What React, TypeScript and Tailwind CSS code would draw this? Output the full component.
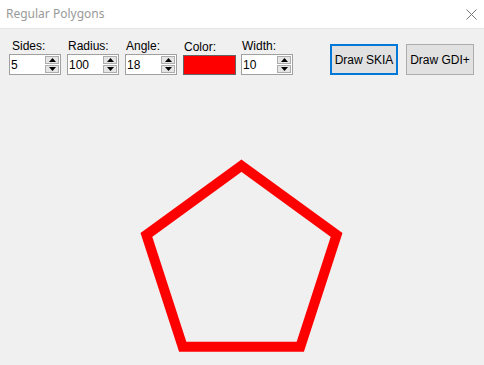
import React from 'react';

const FONT = { fontFamily: '"Liberation Sans", Arial, sans-serif' };

function Spin({ value }: { value: string }) {
  return (
    <div className="flex h-[21px] w-[52px] items-stretch border border-[#a0a0a0] bg-white">
      <div className="flex flex-1 items-center pl-[1px] text-[12px] text-black">{value}</div>
      <div className="my-[1px] mr-[1px] flex w-[14px] flex-col gap-[1px]">
        <div className="flex flex-1 items-center justify-center border border-[#adadad] bg-[#e5e5e5]">
          <svg width="7" height="4" viewBox="0 0 7 4">
            <path d="M3.5 0 L7 4 L0 4 Z" fill="#000" />
          </svg>
        </div>
        <div className="flex flex-1 items-center justify-center border border-[#adadad] bg-[#e5e5e5]">
          <svg width="7" height="4" viewBox="0 0 7 4">
            <path d="M0 0 L7 0 L3.5 4 Z" fill="#000" />
          </svg>
        </div>
      </div>
    </div>
  );
}

function Field({ label, children, indent = 3 }: { label: string; children: React.ReactNode; indent?: number }) {
  return (
    <div className="flex w-[58px] flex-col">
      <span className="h-[14px] text-[12px] leading-[14px] text-black" style={{ paddingLeft: indent }}>
        {label}
      </span>
      <div className="mt-[1px]">{children}</div>
    </div>
  );
}

function pentagonPoints(cx: number, cy: number, r: number) {
  const pts: string[] = [];
  for (let i = 0; i < 5; i++) {
    const a = (-90 + i * 72) * (Math.PI / 180);
    pts.push(`${(cx + r * Math.cos(a)).toFixed(2)},${(cy + r * Math.sin(a)).toFixed(2)}`);
  }
  return pts.join(' ');
}

export default function App() {
  return (
    <div className="flex h-[365px] w-[484px] flex-col overflow-hidden bg-[#f0f0f0]" style={FONT}>
      {/* title bar */}
      <div className="flex h-[29px] shrink-0 items-center justify-between border-b border-[#e6e6e6] bg-white pl-[6px] pr-[7px]">
        <span className="text-[12px] text-[#999999]" style={{ fontFamily: '"Noto Sans", "Open Sans", sans-serif' }}>
          Regular Polygons
        </span>
        <svg width="11" height="11" viewBox="0 0 11 11">
          <path d="M0.5 0.5 L10.5 10.5 M10.5 0.5 L0.5 10.5" stroke="#777" strokeWidth="1" />
        </svg>
      </div>

      {/* controls */}
      <div className="flex shrink-0 items-end pl-[9px] pt-[10px]">
        <Field label="Sides:">
          <Spin value="5" />
        </Field>
        <Field label="Radius:" indent={1}>
          <Spin value="100" />
        </Field>
        <Field label="Angle:" indent={1}>
          <Spin value="18" />
        </Field>
        <Field label="Color:" indent={1}>
          <div className="h-[20px] w-[53px] border border-[#646464] bg-[#ff0000]" />
        </Field>
        <Field label="Width:" indent={1}>
          <Spin value="10" />
        </Field>
        <div className="ml-[31px] flex gap-[8px]">
          <button className="h-[31px] w-[68px] border-2 border-[#0078d7] bg-[#e1e1e1] text-[12px] text-black">
            Draw SKIA
          </button>
          <button className="h-[31px] w-[68px] border border-[#adadad] bg-[#e1e1e1] text-[12px] text-black">
            Draw GDI+
          </button>
        </div>
      </div>

      {/* canvas */}
      <div className="relative flex-1">
        <svg width="484" height="365" viewBox="0 0 484 365" className="absolute left-0 top-[-83px]">
          <polygon
            points={pentagonPoints(241.5, 273.8, 100)}
            fill="none"
            stroke="#ff0000"
            strokeWidth="10"
            strokeLinejoin="miter"
          />
        </svg>
      </div>
    </div>
  );
}
